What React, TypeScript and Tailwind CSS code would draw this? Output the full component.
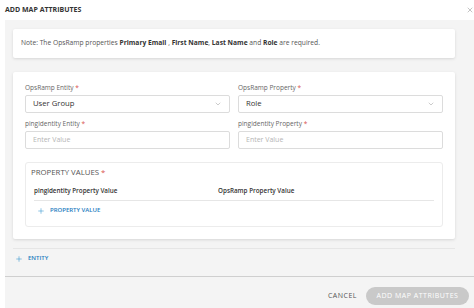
import React from 'react';
import { X, ChevronDown, Plus } from 'lucide-react';

const Field: React.FC<{ label: string; value?: string; select?: boolean }> = ({ label, value, select }) => (
  <div className="flex flex-col">
    <div className="text-[6.5px] text-[#666] leading-[8px] mb-[3px]">
      {label} <span className="text-[#d9534f]">*</span>
    </div>
    <div className="h-[18px] bg-white border border-[#dcdcdc] rounded-[2px] flex items-center justify-between px-[7px]">
      {select ? (
        <span className="text-[7.7px] text-[#333]">{value}</span>
      ) : (
        <span className="text-[7px] text-[#b5b5b5]">Enter Value</span>
      )}
      {select && <ChevronDown className="w-[8px] h-[8px] text-[#999]" strokeWidth={1.5} />}
    </div>
  </div>
);

export default function App() {
  return (
    <div className="w-[474px] h-[308px] bg-white flex flex-col overflow-hidden" style={{ fontFamily: '"Open Sans", sans-serif' }}>
      {/* Header */}
      <div className="h-[20px] shrink-0 flex items-center justify-between pl-[5px] pr-0">
        <span className="text-[7px] font-bold text-[#333]">ADD MAP ATTRIBUTES</span>
        <X className="w-[8px] h-[8px] text-[#888]" strokeWidth={1.5} />
      </div>

      {/* Body */}
      <div className="ml-[5px] h-[288px] bg-[#f4f4f4] flex flex-col">
        <div className="pl-[8px] pr-[19px] pt-[9px]">
          {/* Note */}
          <div className="h-[29px] bg-white rounded-[2px] shadow-[0_1px_3px_rgba(0,0,0,0.12)] flex items-center px-[8px]">
            <span className="text-[6.7px] text-[#555]">
              Note: The OpsRamp properties <b className="text-[#333]">Primary Email</b> , <b className="text-[#333]">First Name</b>, <b className="text-[#333]">Last Name</b> and <b className="text-[#333]">Role</b> are required.
            </span>
          </div>

          {/* Main card */}
          <div className="mt-[14px] bg-white rounded-[2px] shadow-[0_1px_3px_rgba(0,0,0,0.12)] px-[12px] pt-[12px] pb-[12px]">
            <div className="grid grid-cols-2 gap-x-[8px] gap-y-[7px]">
              <Field label="OpsRamp Entity" value="User Group" select />
              <Field label="OpsRamp Property" value="Role" select />
              <Field label="pingidentity Entity" />
              <Field label="pingidentity Property" />
            </div>

            {/* Property values */}
            <div className="mt-[13px] h-[65px] border border-[#ececec] rounded-[3px] px-[5px] pt-[4px]">
              <div className="text-[7.8px] text-[#555] leading-[10px]">
                PROPERTY VALUES <span className="text-[#d9534f]">*</span>
              </div>
              <div className="mx-[3px] mt-[10px] pb-[5px] border-b border-[#e6e6e6] grid grid-cols-[184px_1fr] text-[6.3px] font-semibold text-[#333] leading-[8px]">
                <span>pingidentity Property Value</span>
                <span>OpsRamp Property Value</span>
              </div>
              <div className="flex items-center gap-[5px] ml-[6px] mt-[5px]">
                <Plus className="w-[8px] h-[8px] text-[#1e88c8]" strokeWidth={1.5} />
                <span className="text-[6px] font-semibold text-[#1e7cc0]">PROPERTY VALUE</span>
              </div>
            </div>
          </div>

          {/* Entity */}
          <div className="mt-[9px] border-t border-[#e6e6e6] pt-[5px] flex items-center gap-[5px] pl-[2px]">
            <Plus className="w-[8px] h-[8px] text-[#1e88c8]" strokeWidth={1.5} />
            <span className="text-[6px] font-semibold text-[#1e7cc0]">ENTITY</span>
          </div>
        </div>

        {/* Footer */}
        <div className="mt-auto border-t border-[#cfcfcf] h-[32px] flex items-start pt-[10px] justify-end pr-[5px] gap-[9px]">
          <span className="text-[7px] text-[#555] tracking-[0.5px] leading-[18px]">CANCEL</span>
          <div className="h-[18px] w-[103px] rounded-full bg-[#c9c9c9] flex items-center justify-center">
            <span className="text-[7px] text-white tracking-[0.5px]">ADD MAP ATTRIBUTES</span>
          </div>
        </div>
      </div>
    </div>
  );
}
